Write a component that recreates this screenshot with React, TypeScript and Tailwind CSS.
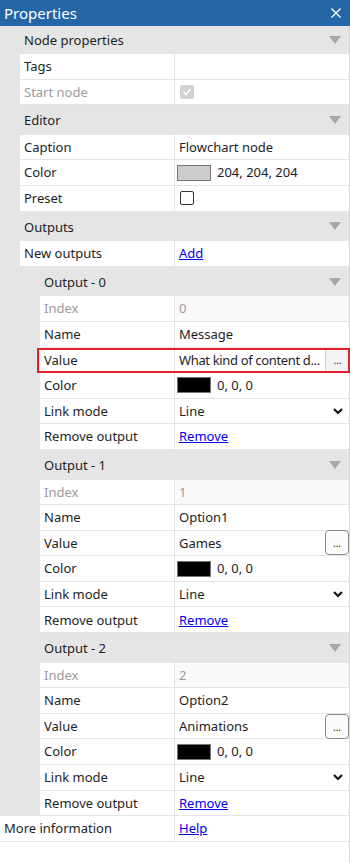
import React from "react";

const FONT = { fontFamily: '"Noto Sans", "Open Sans", sans-serif' };

function Tri() {
  return (
    <svg width="12" height="8" viewBox="0 0 12 8" className="shrink-0">
      <polygon points="0,0 12,0 6,8" fill="#a8a8a8" />
    </svg>
  );
}

function Header({ title, first }: { title: string; first?: boolean }) {
  return (
    <div className={`flex items-center justify-between pl-1 pr-2 ${first ? "h-[28px]" : "h-[29.6px]"}`}>
      <span className="text-[13px] text-[#1e1e1e] pt-[2px]">{title}</span>
      <Tri />
    </div>
  );
}

function Row({
  label,
  children,
  disabled,
  valueBg,
  pl = "pl-1",
  selected,
}: {
  label: string;
  children?: React.ReactNode;
  disabled?: boolean;
  valueBg?: string;
  pl?: string;
  selected?: boolean;
}) {
  return (
    <div className="relative flex h-[25.6px] bg-white border-b border-[#e4e4e4]">
      <div className={`flex-1 flex items-center pt-[1px] ${pl} text-[13px] ${disabled ? "text-[#9b9b9b]" : "text-[#1e1e1e]"}`}>
        {label}
      </div>
      <div
        className={`w-[175px] shrink-0 flex items-center border-l border-[#e4e4e4] text-[13px] ${
          disabled ? "text-[#9b9b9b]" : "text-[#1e1e1e]"
        } ${valueBg ?? ""}`}
      >
        {children}
      </div>
      {selected && (
        <div className="absolute left-[-3px] right-[-1px] top-[0px] bottom-[-1px] border-2 border-[#e3202c] pointer-events-none" />
      )}
    </div>
  );
}

function Swatch({ color, text }: { color: string; text: string }) {
  return (
    <div className="flex items-center pl-[2px]">
      <div className={`w-[34px] h-[16px] border border-[#767676] ${color}`} />
      <span className="ml-[6px] pt-[1px]">{text}</span>
    </div>
  );
}

function Link({ text }: { text: string }) {
  return <span className="pl-[4px] pt-[1px] text-[#0000ee] underline">{text}</span>;
}

function Chevron() {
  return (
    <svg width="10" height="7" viewBox="0 0 10 7" className="mr-[6px]">
      <polyline points="1,1 5,5 9,1" fill="none" stroke="#111" strokeWidth="2.2" />
    </svg>
  );
}

function Val({ children }: { children: React.ReactNode }) {
  return <span className="pl-[4px] pt-[1px] whitespace-nowrap">{children}</span>;
}

function OutputGroup({
  n,
  name,
  value,
  selected,
}: {
  n: number;
  name: string;
  value: string;
  selected?: boolean;
}) {
  return (
    <div className="pl-5">
      <Header title={`Output - ${n}`} />
      <Row label="Index" disabled valueBg="bg-[#f9f9f9]">
        <Val>{n}</Val>
      </Row>
      <Row label="Name">
        <Val>{name}</Val>
      </Row>
      <Row label="Value" selected={selected}>
        <div className="flex-1 flex items-center h-full min-w-0">
          <span className={`pl-[4px] pt-[1px] flex-1 whitespace-nowrap overflow-hidden ${selected ? "tracking-[-0.35px]" : ""}`}>
            {value}
          </span>
          {selected ? (
            <div className="w-[24px] h-full shrink-0 flex items-end justify-center border-l border-[#cfcfcf] bg-[#f3f3f3] text-[10px] leading-none pb-[7px]">
              ...
            </div>
          ) : (
            <div className="w-[24px] h-[25px] shrink-0 flex items-end justify-center rounded-[4px] border border-[#8a8a8a] bg-[#fbfbfb] text-[10px] leading-none pb-[6px]">
              ...
            </div>
          )}
        </div>
      </Row>
      <Row label="Color">
        <Swatch color="bg-black" text="0, 0, 0" />
      </Row>
      <Row label="Link mode">
        <div className="flex-1 flex items-center justify-between">
          <Val>Line</Val>
          <Chevron />
        </div>
      </Row>
      <Row label="Remove output">
        <Link text="Remove" />
      </Row>
    </div>
  );
}

export default function App() {
  return (
    <div className="w-[350px] h-[863px] bg-white flex flex-col overflow-hidden" style={FONT}>
      <div className="h-[26px] shrink-0 bg-[#2367a6] flex items-center justify-between pl-1 pr-[9px]">
        <span className="text-white text-[15px]">Properties</span>
        <svg width="10" height="10" viewBox="0 0 10 10">
          <path d="M0.5 0.5 L9.5 9.5 M9.5 0.5 L0.5 9.5" stroke="#fff" strokeWidth="1.4" />
        </svg>
      </div>
      <div className="flex-1 flex flex-col border-r border-[#d6d6d6]">
        <div className="bg-[#e5e5e5] pl-5">
          <Header title="Node properties" first />
          <Row label="Tags" />
          <Row label="Start node" disabled>
            <div className="ml-[5px] w-[14px] h-[14px] rounded-[2px] bg-[#d2d2d2] flex items-center justify-center">
              <svg width="10" height="10" viewBox="0 0 10 10">
                <polyline points="1.5,5 4,7.5 8.5,2" fill="none" stroke="#fff" strokeWidth="1.6" />
              </svg>
            </div>
          </Row>
          <Header title="Editor" />
          <Row label="Caption">
            <Val>Flowchart node</Val>
          </Row>
          <Row label="Color">
            <Swatch color="bg-[#cccccc]" text="204, 204, 204" />
          </Row>
          <Row label="Preset">
            <div className="ml-[5px] w-[14px] h-[14px] rounded-[2px] border border-[#333] bg-white" />
          </Row>
          <Header title="Outputs" />
          <Row label="New outputs">
            <Link text="Add" />
          </Row>
          <OutputGroup n={0} name="Message" value="What kind of content d..." selected />
          <OutputGroup n={1} name="Option1" value="Games" />
          <OutputGroup n={2} name="Option2" value="Animations" />
        </div>
        <Row label="More information">
          <Link text="Help" />
        </Row>
      </div>
    </div>
  );
}
